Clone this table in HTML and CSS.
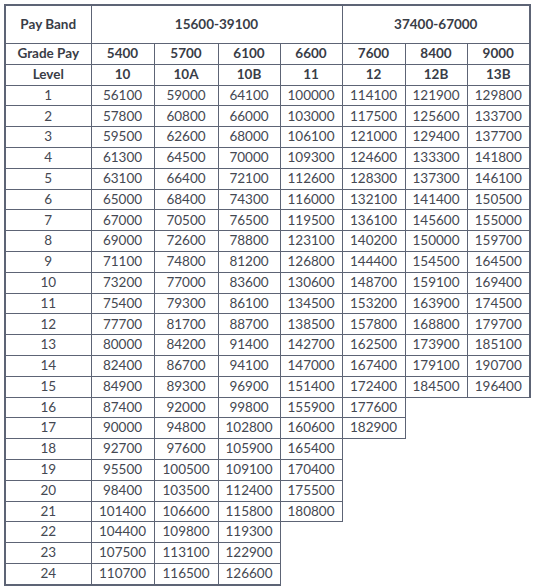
FILE: index.html
```html
<!DOCTYPE html>
<html>
<head>
<meta charset="utf-8">
<link rel="stylesheet" href="styles.css">
</head>
<body>
<div class="page">
<table class="pay">
<colgroup>
<col class="c1"><col class="c2"><col class="c3"><col class="c4"><col class="c5"><col class="c6"><col class="c7"><col class="c8">
</colgroup>
<thead>
<tr class="band"><th>Pay Band</th><th colspan="4">15600-39100</th><th colspan="3">37400-67000</th></tr>
<tr class="hd"><th>Grade Pay</th><th>5400</th><th>5700</th><th>6100</th><th>6600</th><th>7600</th><th>8400</th><th>9000</th></tr>
<tr class="hd"><th>Level</th><th>10</th><th>10A</th><th>10B</th><th>11</th><th>12</th><th>12B</th><th>13B</th></tr>
</thead>
<tbody>
<tr><td>1</td><td>56100</td><td>59000</td><td>64100</td><td>100000</td><td>114100</td><td>121900</td><td>129800</td></tr>
<tr><td>2</td><td>57800</td><td>60800</td><td>66000</td><td>103000</td><td>117500</td><td>125600</td><td>133700</td></tr>
<tr><td>3</td><td>59500</td><td>62600</td><td>68000</td><td>106100</td><td>121000</td><td>129400</td><td>137700</td></tr>
<tr><td>4</td><td>61300</td><td>64500</td><td>70000</td><td>109300</td><td>124600</td><td>133300</td><td>141800</td></tr>
<tr><td>5</td><td>63100</td><td>66400</td><td>72100</td><td>112600</td><td>128300</td><td>137300</td><td>146100</td></tr>
<tr><td>6</td><td>65000</td><td>68400</td><td>74300</td><td>116000</td><td>132100</td><td>141400</td><td>150500</td></tr>
<tr><td>7</td><td>67000</td><td>70500</td><td>76500</td><td>119500</td><td>136100</td><td>145600</td><td>155000</td></tr>
<tr><td>8</td><td>69000</td><td>72600</td><td>78800</td><td>123100</td><td>140200</td><td>150000</td><td>159700</td></tr>
<tr><td>9</td><td>71100</td><td>74800</td><td>81200</td><td>126800</td><td>144400</td><td>154500</td><td>164500</td></tr>
<tr><td>10</td><td>73200</td><td>77000</td><td>83600</td><td>130600</td><td>148700</td><td>159100</td><td>169400</td></tr>
<tr><td>11</td><td>75400</td><td>79300</td><td>86100</td><td>134500</td><td>153200</td><td>163900</td><td>174500</td></tr>
<tr><td>12</td><td>77700</td><td>81700</td><td>88700</td><td>138500</td><td>157800</td><td>168800</td><td>179700</td></tr>
<tr><td>13</td><td>80000</td><td>84200</td><td>91400</td><td>142700</td><td>162500</td><td>173900</td><td>185100</td></tr>
<tr><td>14</td><td>82400</td><td>86700</td><td>94100</td><td>147000</td><td>167400</td><td>179100</td><td>190700</td></tr>
<tr><td>15</td><td>84900</td><td>89300</td><td>96900</td><td>151400</td><td>172400</td><td>184500</td><td>196400</td></tr>
<tr><td>16</td><td>87400</td><td>92000</td><td>99800</td><td>155900</td><td>177600</td></tr>
<tr><td>17</td><td>90000</td><td>94800</td><td>102800</td><td>160600</td><td>182900</td></tr>
<tr><td>18</td><td>92700</td><td>97600</td><td>105900</td><td>165400</td></tr>
<tr><td>19</td><td>95500</td><td>100500</td><td>109100</td><td>170400</td></tr>
<tr><td>20</td><td>98400</td><td>103500</td><td>112400</td><td>175500</td></tr>
<tr><td>21</td><td>101400</td><td>106600</td><td>115800</td><td>180800</td></tr>
<tr><td>22</td><td>104400</td><td>109800</td><td>119300</td></tr>
<tr><td>23</td><td>107500</td><td>113100</td><td>122900</td></tr>
<tr><td>24</td><td>110700</td><td>116500</td><td>126600</td></tr>
</tbody>
</table>
</div>
</body>
</html>
```

FILE: styles.css
```css
html, body {
  margin: 0;
  padding: 0;
  background: #ffffff;
}
.page {
  padding: 4px 0 0 4px;
}
.pay {
  border-collapse: collapse;
  table-layout: fixed;
  width: 525px;
  font-family: Lato, "Open Sans", sans-serif;
  font-size: 13.5px;
  color: #444852;
}
.c1 { width: 86px; }
.c2 { width: 63px; }
.c3 { width: 64px; }
.c4 { width: 62px; }
.c5 { width: 62px; }
.c6 { width: 63px; }
.c7 { width: 62px; }
.c8 { width: 63px; }
.pay th, .pay td {
  border: 1px solid #5d6475;
  padding: 0;
  text-align: center;
  vertical-align: middle;
  line-height: 1;
}
.pay th {
  font-weight: 700;
  color: #393d47;
}
.band th {
  height: 37px;
}
.hd th, .pay td {
  height: 19.8px;
}
.pay thead tr:first-child th {
  border-top-width: 2px;
}
.pay tr > :first-child {
  border-left-width: 2px;
}
.band th:last-child,
.hd th:last-child,
.pay tbody tr:nth-child(-n+15) td:last-child {
  border-right-width: 2px;
}
.pay tbody tr:last-child td {
  border-bottom-width: 2px;
}
```
